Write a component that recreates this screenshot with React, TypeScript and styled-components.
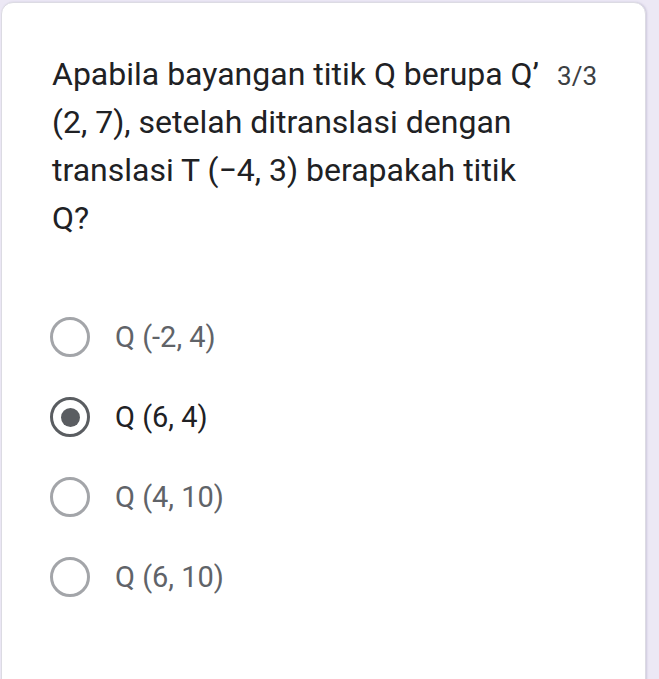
import React from "react";
import styled, { createGlobalStyle } from "styled-components";

const Global = createGlobalStyle`
  html, body { margin: 0; padding: 0; background: #ece8f5; }
  body { font-family: Roboto, "Noto Sans", Arial, sans-serif; }
`;

const Page = styled.div`
  width: 659px;
  height: 679px;
  overflow: hidden;
  padding: 2px 0 0 1px;
  box-sizing: border-box;
`;

const Card = styled.div`
  width: 645px;
  height: 720px;
  box-sizing: border-box;
  background: #ffffff;
  border: 1.5px solid #dcdbe3;
  border-radius: 12px;
  box-shadow: 1px 0 2px rgba(120, 110, 150, 0.25);
  padding: 47px 48px 0 50px;
`;

const Header = styled.div`
  display: flex;
  align-items: flex-start;
  justify-content: space-between;
`;

const Question = styled.div`
  width: 498px;
  font-size: 32px;
  line-height: 48px;
  color: #202124;
  letter-spacing: 0px;
`;

const Points = styled.div`
  font-size: 26px;
  line-height: 48px;
  color: #3c4043;
  padding-top: 2px;
`;

const Options = styled.div`
  display: flex;
  flex-direction: column;
  gap: 40px;
  margin-top: 75px;
  margin-left: -2px;
`;

const Option = styled.div`
  display: flex;
  align-items: center;
  height: 40px;
  gap: 25px;
`;

const Radio = styled.div<{ $checked?: boolean }>`
  width: 40px;
  height: 40px;
  box-sizing: border-box;
  border-radius: 50%;
  border: 3.5px solid ${(p) => (p.$checked ? "#5a5d61" : "#a3a5a9")};
  display: flex;
  align-items: center;
  justify-content: center;
  flex: none;
`;

const Dot = styled.div`
  width: 19px;
  height: 19px;
  border-radius: 50%;
  background: #5a5d61;
`;

const Label = styled.div<{ $checked?: boolean }>`
  font-size: 29px;
  color: ${(p) => (p.$checked ? "#202124" : "#606368")};
`;

const options = ["Q (-2, 4)", "Q (6, 4)", "Q (4, 10)", "Q (6, 10)"];

export default function App() {
  return (
    <>
      <Global />
      <Page>
        <Card>
          <Header>
            <Question>
              Apabila bayangan titik Q berupa Q’ (2, 7), setelah ditranslasi dengan translasi T (−4, 3) berapakah titik Q?
            </Question>
            <Points>3/3</Points>
          </Header>
          <Options>
            {options.map((o, i) => (
              <Option key={o}>
                <Radio $checked={i === 1}>{i === 1 && <Dot />}</Radio>
                <Label $checked={i === 1}>{o}</Label>
              </Option>
            ))}
          </Options>
        </Card>
      </Page>
    </>
  );
}
